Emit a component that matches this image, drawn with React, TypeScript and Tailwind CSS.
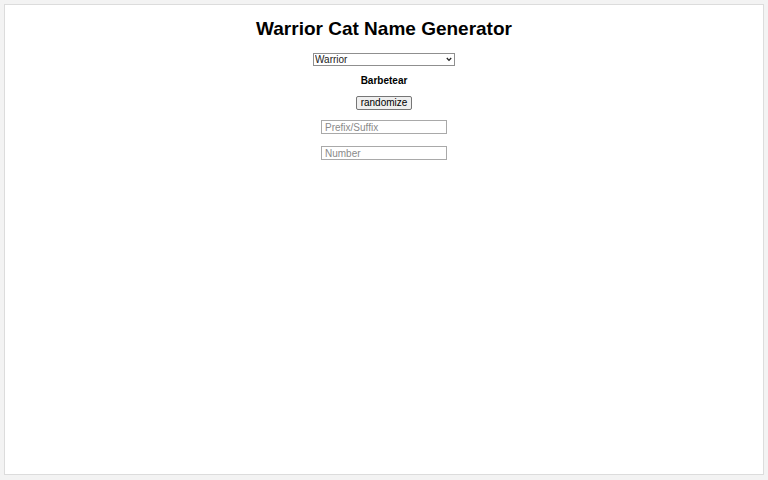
import React, { useState } from "react";

const prefixes = ["Barbe", "Fire", "Sand", "Grey", "Bramble", "Leaf"];
const suffixes = ["tear", "heart", "storm", "stripe", "claw", "pelt"];

export default function App() {
  const [rank, setRank] = useState("Warrior");
  const [name, setName] = useState("Barbetear");

  const randomize = () => {
    const p = prefixes[Math.floor(Math.random() * prefixes.length)];
    const s = suffixes[Math.floor(Math.random() * suffixes.length)];
    setName(p + s);
  };

  return (
    <div
      className="w-[768px] h-[480px] bg-[#f3f3f3] p-[4px] pb-[5px]"
      style={{ fontFamily: '"Liberation Sans", Arial, sans-serif' }}
    >
      <div className="h-full bg-white border border-[#dcdcdc] flex flex-col items-center">
        <h1 className="mt-[13px] text-[19px] leading-[22px] font-bold text-black">
          Warrior Cat Name Generator
        </h1>
        <div className="relative mt-[13px] w-[142px] h-[13px]">
          <select
            value={rank}
            onChange={(e) => setRank(e.target.value)}
            className="block appearance-none w-full h-[13px] text-[10px] leading-[11px] border border-[#8f8f8f] bg-white text-[#222] pl-[1px] pr-[10px] py-0 outline-none"
          >
            <option>Warrior</option>
            <option>Apprentice</option>
            <option>Kit</option>
            <option>Leader</option>
          </select>
          <svg
            className="pointer-events-none absolute right-[3px] top-[4px]"
            width="6"
            height="5"
            viewBox="0 0 6 5"
          >
            <path d="M0.8 1 L3 3.4 L5.2 1" fill="none" stroke="#222" strokeWidth="1.3" />
          </svg>
        </div>
        <p className="mt-[9px] text-[10px] leading-[12px] font-bold text-black">{name}</p>
        <button
          onClick={randomize}
          className="mt-[9px] h-[14px] px-[4px] text-[10px] leading-[12px] text-black bg-[#efefef] border border-[#767676] rounded-[2px]"
        >
          randomize
        </button>
        <input
          placeholder="Prefix/Suffix"
          className="mt-[10px] w-[126px] h-[14px] px-[3px] text-[10px] leading-[12px] border border-[#a9a9a9] placeholder:text-[#8a8a8a] outline-none"
        />
        <input
          placeholder="Number"
          className="mt-[12px] w-[126px] h-[14px] px-[3px] text-[10px] leading-[12px] border border-[#a9a9a9] placeholder:text-[#8a8a8a] outline-none"
        />
      </div>
    </div>
  );
}
